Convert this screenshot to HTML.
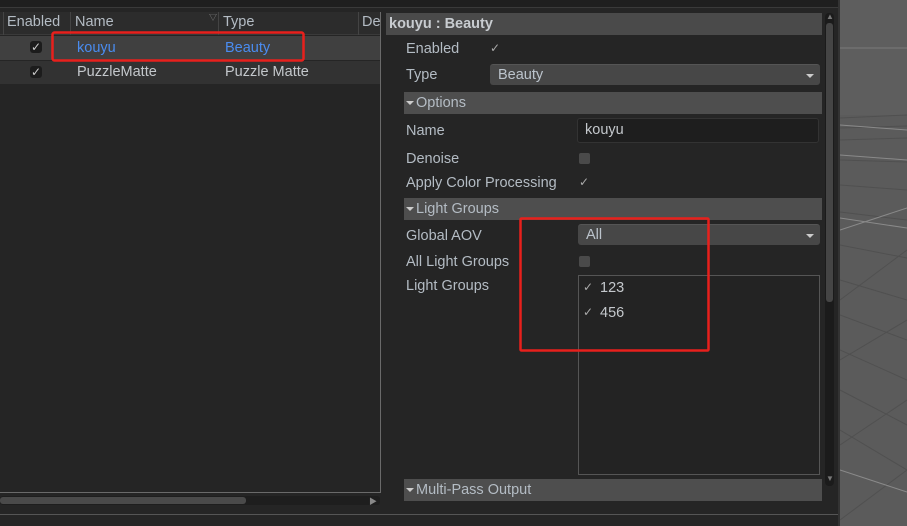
<!DOCTYPE html>
<html><head><meta charset="utf-8"><style>
*{margin:0;padding:0;box-sizing:border-box}
body{width:907px;height:526px;overflow:hidden;background:#252525;font-family:"Liberation Sans","Noto Sans CJK SC",sans-serif;font-size:14.5px;color:#c4c8cc;position:relative}
.a{position:absolute;white-space:nowrap}
.lbl{color:#b4bcc4}
.chk{position:absolute;width:12px;height:12px;background:#1c1c1c;border-radius:3px;color:#c8c8c8;font-size:11px;line-height:12px;text-align:center}
.ck{color:#aaa;font-size:12px;font-family:"DejaVu Sans",sans-serif}
.box{position:absolute;width:11px;height:11px;background:#4a4a4a;border-radius:2px}
.sec{position:absolute;left:404px;width:418px;height:22px;background:#4e4e4e;color:#b4bcc4;line-height:22px;padding-left:2px}
.dd{position:absolute;background:#474747;border-radius:3px;height:21px;line-height:21px;padding-left:8px;color:#bcc4cc;border-top:1px solid #555}
.dd:after{content:"";position:absolute;right:6px;top:9px;border-left:4px solid transparent;border-right:4px solid transparent;border-top:4px solid #ccc}
.tri{display:inline-block;border-left:4px solid transparent;border-right:4px solid transparent;border-top:4px solid #ccc;vertical-align:middle;margin-right:2px}
</style></head><body>
<div class="a" style="left:0;top:0;width:907px;height:8px;background:#1f1f1f;border-bottom:1px solid #3a3a3a"></div>
<div class="a" style="left:0;top:12px;width:381px;height:23px;background:#2c2c2c;border-bottom:1px solid #3a3a3a"></div>
<div class="a" style="left:3px;top:12px;width:1px;height:23px;background:#444"></div>
<div class="a" style="left:70px;top:12px;width:1px;height:23px;background:#444"></div>
<div class="a" style="left:218px;top:12px;width:1px;height:23px;background:#444"></div>
<div class="a" style="left:358px;top:12px;width:1px;height:23px;background:#444"></div>
<div class="a lbl" style="left:7px;top:14px">Enabled</div>
<div class="a lbl" style="left:75px;top:14px">Name</div>
<div class="a" style="left:209px;top:12px;font-size:8px;color:#888">▽</div>
<div class="a lbl" style="left:223px;top:14px">Type</div>
<div class="a lbl" style="left:362px;top:14px">De</div>
<div class="a" style="left:0;top:36px;width:381px;height:24px;background:#404040"></div>
<div class="a" style="left:0;top:61px;width:381px;height:23px;background:#323232"></div>
<div class="chk ck" style="left:30px;top:41px;color:#ccc">✓</div>
<div class="chk ck" style="left:30px;top:66px;color:#ccc">✓</div>
<div class="a" style="left:77px;top:40px;color:#4a8cf0">kouyu</div>
<div class="a" style="left:225px;top:40px;color:#4a8cf0">Beauty</div>
<div class="a" style="left:77px;top:64px">PuzzleMatte</div>
<div class="a" style="left:225px;top:64px">Puzzle Matte</div>
<div class="a" style="left:380px;top:12px;width:1px;height:481px;background:#6a6a6a"></div>
<div class="a" style="left:0;top:492px;width:381px;height:1px;background:#6a6a6a"></div>
<div class="a" style="left:0;top:496px;width:380px;height:9px;background:#1e1e1e;border-radius:3px"></div>
<div class="a" style="left:0;top:497px;width:246px;height:7px;background:#4a4a4a;border-radius:3px"></div>
<div class="a" style="left:369px;top:496px;font-size:8px;color:#888">▶</div>
<div class="a" style="left:0;top:514px;width:907px;height:1px;background:#555"></div>
<div class="a" style="left:386px;top:13px;width:436px;height:22px;background:#4a4a4a;font-weight:bold;color:#c8ccd0;line-height:22px;padding-left:3px">kouyu : Beauty</div>
<div class="a lbl" style="left:406px;top:41px">Enabled</div>
<div class="a ck" style="left:490px;top:41px">✓</div>
<div class="a lbl" style="left:406px;top:67px">Type</div>
<div class="dd" style="left:490px;top:64px;width:330px">Beauty</div>
<div class="sec" style="top:92px"><span class="tri"></span>Options</div>
<div class="a lbl" style="left:406px;top:123px">Name</div>
<div class="a" style="left:577px;top:118px;width:242px;height:25px;background:#1e1e1e;border:1px solid #333;border-radius:3px;padding-left:7px;line-height:23px">kouyu</div>
<div class="a lbl" style="left:406px;top:151px">Denoise</div>
<div class="box" style="left:579px;top:153px"></div>
<div class="a lbl" style="left:406px;top:175px">Apply Color Processing</div>
<div class="a ck" style="left:579px;top:175px">✓</div>
<div class="sec" style="top:198px"><span class="tri"></span>Light Groups</div>
<div class="a lbl" style="left:406px;top:228px">Global AOV</div>
<div class="dd" style="left:578px;top:224px;width:242px">All</div>
<div class="a lbl" style="left:406px;top:254px">All Light Groups</div>
<div class="box" style="left:579px;top:256px"></div>
<div class="a lbl" style="left:406px;top:278px">Light Groups</div>
<div class="a" style="left:578px;top:275px;width:242px;height:200px;border:1px solid #555;background:#232323"></div>
<div class="a ck" style="left:583px;top:280px">✓</div>
<div class="a" style="left:600px;top:280px">123</div>
<div class="a ck" style="left:583px;top:305px">✓</div>
<div class="a" style="left:600px;top:305px">456</div>
<div class="sec" style="top:479px"><span class="tri"></span>Multi-Pass Output</div>
<div class="a" style="left:825px;top:13px;width:9px;height:473px;background:#1b1b1b;border-radius:4px"></div>
<div class="a" style="left:826px;top:23px;width:7px;height:279px;background:#454545;border-radius:3px"></div>
<div class="a" style="left:826px;top:12px;font-size:8px;color:#777">▲</div>
<div class="a" style="left:826px;top:474px;font-size:8px;color:#777">▼</div>
<div class="a" style="left:838px;top:0;width:2px;height:526px;background:#333"></div>
<svg class="a" style="left:840px;top:0" width="67" height="526">
<rect width="67" height="526" fill="#5b5b5b"/>
<rect width="67" height="115" fill="#5e5e5e"/>
<line x1="0" y1="48" x2="67" y2="48" stroke="#7a7a7a"/>
<g stroke="#505050" stroke-width="1">
<line x1="0" y1="118" x2="67" y2="115"/><line x1="0" y1="128" x2="67" y2="126"/><line x1="0" y1="140" x2="67" y2="138"/>
<line x1="0" y1="160" x2="67" y2="162"/><line x1="0" y1="185" x2="67" y2="190"/><line x1="0" y1="212" x2="67" y2="220"/>
<line x1="0" y1="245" x2="67" y2="258"/><line x1="0" y1="280" x2="67" y2="300"/><line x1="0" y1="315" x2="67" y2="340"/>
<line x1="0" y1="350" x2="67" y2="380"/><line x1="0" y1="390" x2="67" y2="425"/><line x1="0" y1="430" x2="67" y2="470"/>
<line x1="0" y1="300" x2="67" y2="250"/><line x1="0" y1="360" x2="67" y2="320"/><line x1="0" y1="445" x2="67" y2="400"/><line x1="0" y1="520" x2="67" y2="470"/>
</g>
<g stroke="#8a8a8a"><line x1="0" y1="125" x2="67" y2="130"/><line x1="0" y1="155" x2="67" y2="160"/><line x1="0" y1="230" x2="67" y2="208"/><line x1="0" y1="218" x2="67" y2="228"/><line x1="0" y1="470" x2="67" y2="492"/></g>
</svg>
<svg class="a" style="left:0;top:0" width="907" height="526">
<rect x="52.5" y="32.5" width="251" height="28" rx="2" fill="none" stroke="#e8201c" stroke-width="2.5"/>
<rect x="520.5" y="218.5" width="188" height="132" rx="1" fill="none" stroke="#e8201c" stroke-width="2.5"/>
</svg>
</body></html>
